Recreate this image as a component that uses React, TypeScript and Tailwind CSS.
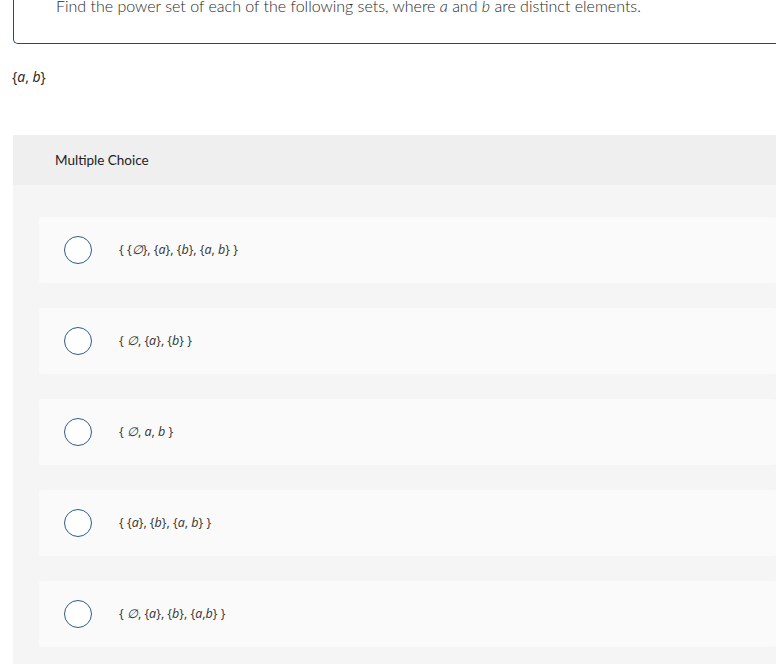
const options = [
  <>{"{ {"}<i>∅</i>{"}, {"}<i>a</i>{"}, {"}<i>b</i>{"}, {"}<i>a</i>, <i>b</i>{"} }"}</>,
  <>{"{ "}<i>∅</i>{", {"}<i>a</i>{"}, {"}<i>b</i>{"} }"}</>,
  <>{"{ "}<i>∅</i>, <i>a</i>, <i>b</i>{" }"}</>,
  <>{"{ {"}<i>a</i>{"}, {"}<i>b</i>{"}, {"}<i>a</i>, <i>b</i>{"} }"}</>,
  <>{"{ "}<i>∅</i>{", {"}<i>a</i>{"}, {"}<i>b</i>{"}, {"}<i>a</i>,<i>b</i>{"} }"}</>,
];

export default function App() {
  return (
    <div className="h-[664px] w-[776px] overflow-hidden bg-white font-['Lato',sans-serif] text-[#333]">
      <div className="ml-[13px] flow-root h-[44px] rounded-bl-[5px] border-b-[1.5px] border-l-[1.5px] border-[#1f4a7a] pl-[42px]">
        <p className="text-[16px] font-light leading-[12px] text-[#2a2a2a]">
          Find the power set of each of the following sets, where <i>a</i> and <i>b</i> are distinct elements.
        </p>
      </div>

      <p className="ml-[12px] mt-[24px] font-['Open_Sans',sans-serif] text-[14px] leading-[17px] text-[#222]">
        {"{"}<i>a</i>, <i>b</i>{"}"}
      </p>

      <div className="ml-[13px] mt-[50px] flex h-[50px] items-center bg-[#efefef] pl-[42px]">
        <span className="text-[13.5px] text-[#222]">Multiple Choice</span>
      </div>

      <div className="ml-[13px] flex h-[500px] flex-col gap-[25px] bg-[#f5f5f5] pl-[26px] pt-[32px]">
        {options.map((o, i) => (
          <div key={i} className="flex h-[66px] shrink-0 items-center gap-[27px] rounded-[3px] bg-[#fafafa] pl-[25px]">
            <span className="h-[28px] w-[28px] rounded-full border-[1.5px] border-[#2e5c8a] bg-white" />
            <span className="font-['Open_Sans',sans-serif] text-[12.5px] text-[#333]">{o}</span>
          </div>
        ))}
      </div>
    </div>
  );
}
